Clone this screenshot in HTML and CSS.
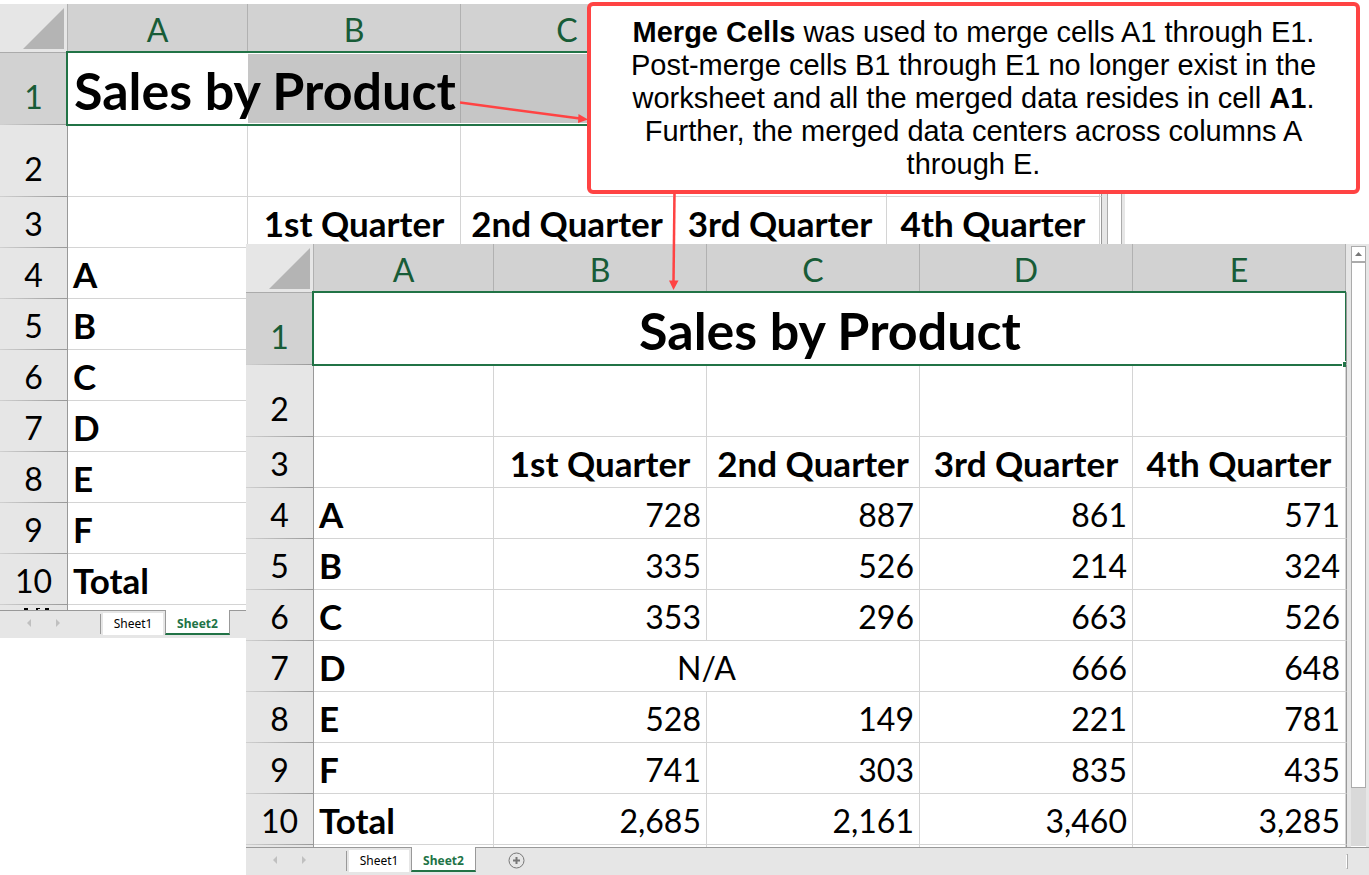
FILE: index.html
```
<!DOCTYPE html>
<html lang="en">
<head>
    <meta charset="UTF-8">
    <meta name="viewport" content="width=device-width, initial-scale=1.0">
    <title>Merge Cells</title>
    <link rel="stylesheet" href="styles.css">
</head>
<body>

    <div class="canvas">

        <!-- before the merge -->
        <section class="window window-before">
            <div class="main">
                <div class="pane">
                    <table class="sheet">
                        <colgroup>
                            <col class="col-num"><col class="col-a"><col class="col-q"><col class="col-q"><col class="col-q"><col class="col-q"><col>
                        </colgroup>
                        <thead>
                            <tr>
                                <th class="corner"><svg width="41" height="41" viewBox="0 0 41 41"><path d="M41 0V41H0Z" fill="#b4b4b4"/></svg></th>
                                <th>A</th><th>B</th><th>C</th><th>D</th><th>E</th><th class="filler"></th>
                            </tr>
                        </thead>
                        <tbody>
                            <tr class="tall selected">
                                <th>1</th><td class="title">Sales by Product</td><td class="shaded"></td><td class="shaded"></td><td class="shaded"></td><td class="shaded"></td><td class="filler"></td>
                            </tr>
                            <tr class="tall"><th>2</th><td></td><td></td><td></td><td></td><td></td><td class="filler"></td></tr>
                            <tr class="quarters"><th>3</th><td></td><td>1st Quarter</td><td>2nd Quarter</td><td>3rd Quarter</td><td>4th Quarter</td><td class="filler"></td></tr>
                            <tr><th>4</th><td class="name">A</td><td></td><td></td><td></td><td></td><td class="filler"></td></tr>
                            <tr><th>5</th><td class="name">B</td><td></td><td></td><td></td><td></td><td class="filler"></td></tr>
                            <tr><th>6</th><td class="name">C</td><td></td><td></td><td></td><td></td><td class="filler"></td></tr>
                            <tr><th>7</th><td class="name">D</td><td></td><td></td><td></td><td></td><td class="filler"></td></tr>
                            <tr><th>8</th><td class="name">E</td><td></td><td></td><td></td><td></td><td class="filler"></td></tr>
                            <tr><th>9</th><td class="name">F</td><td></td><td></td><td></td><td></td><td class="filler"></td></tr>
                            <tr><th>10</th><td class="name">Total</td><td></td><td></td><td></td><td></td><td class="filler"></td></tr>
                            <tr class="cut"><th><svg width="26" height="3" viewBox="0 0 26 3"><path d="M0 0H4V3H0ZM12 0H16V1H14V3H12ZM21 0H25V3H21Z"/></svg></th><td></td><td></td><td></td><td></td><td></td><td class="filler"></td></tr>
                        </tbody>
                    </table>
                </div>
                <div class="scroll">
                    <button class="scroll-up" aria-label="Scroll up"><svg width="7" height="4" viewBox="0 0 7 4"><path d="M3.5 0L7 4H0Z" fill="#777"/></svg></button>
                    <div class="thumb"></div>
                    <div class="track"></div>
                </div>
            </div>
            <nav class="tabs">
                <button class="arrow" aria-label="Previous sheet"><svg width="4" height="8" viewBox="0 0 4 8"><path d="M4 0V8L0 4Z" fill="#c0c0c0"/></svg></button>
                <button class="arrow" aria-label="Next sheet"><svg width="4" height="8" viewBox="0 0 4 8"><path d="M0 0V8L4 4Z" fill="#c0c0c0"/></svg></button>
                <span class="divider"></span>
                <button class="tab">Sheet1</button>
                <button class="tab active">Sheet2</button>
            </nav>
        </section>

        <!-- after the merge -->
        <section class="window window-after">
            <div class="main">
                <div class="pane">
                    <table class="sheet">
                        <colgroup>
                            <col class="col-num"><col class="col-a"><col class="col-q"><col class="col-q"><col class="col-q"><col class="col-q"><col>
                        </colgroup>
                        <thead>
                            <tr>
                                <th class="corner"><svg width="41" height="41" viewBox="0 0 41 41"><path d="M41 0V41H0Z" fill="#b4b4b4"/></svg></th>
                                <th>A</th><th>B</th><th>C</th><th>D</th><th>E</th><th class="filler"></th>
                            </tr>
                        </thead>
                        <tbody>
                            <tr class="tall selected">
                                <th>1</th><td class="title merged" colspan="5">Sales by Product<span class="handle"></span></td><td class="filler"></td>
                            </tr>
                            <tr class="tall"><th>2</th><td></td><td></td><td></td><td></td><td></td><td class="filler"></td></tr>
                            <tr class="quarters"><th>3</th><td></td><td>1st Quarter</td><td>2nd Quarter</td><td>3rd Quarter</td><td>4th Quarter</td><td class="filler"></td></tr>
                            <tr><th>4</th><td class="name">A</td><td>728</td><td>887</td><td>861</td><td>571</td><td class="filler"></td></tr>
                            <tr><th>5</th><td class="name">B</td><td>335</td><td>526</td><td>214</td><td>324</td><td class="filler"></td></tr>
                            <tr><th>6</th><td class="name">C</td><td>353</td><td>296</td><td>663</td><td>526</td><td class="filler"></td></tr>
                            <tr><th>7</th><td class="name">D</td><td class="merged" colspan="2">N/A</td><td>666</td><td>648</td><td class="filler"></td></tr>
                            <tr><th>8</th><td class="name">E</td><td>528</td><td>149</td><td>221</td><td>781</td><td class="filler"></td></tr>
                            <tr><th>9</th><td class="name">F</td><td>741</td><td>303</td><td>835</td><td>435</td><td class="filler"></td></tr>
                            <tr><th>10</th><td class="name">Total</td><td>2,685</td><td>2,161</td><td>3,460</td><td>3,285</td><td class="filler"></td></tr>
                            <tr class="cut"><th><svg width="26" height="3" viewBox="0 0 26 3"><path d="M0 0H4V3H0ZM12 0H16V1H14V3H12ZM21 0H25V3H21Z"/></svg></th><td></td><td></td><td></td><td></td><td></td><td class="filler"></td></tr>
                        </tbody>
                    </table>
                </div>
                <div class="scroll">
                    <button class="scroll-up" aria-label="Scroll up"><svg width="7" height="4" viewBox="0 0 7 4"><path d="M3.5 0L7 4H0Z" fill="#777"/></svg></button>
                    <div class="thumb"></div>
                    <div class="track"></div>
                </div>
            </div>
            <nav class="tabs">
                <button class="arrow" aria-label="Previous sheet"><svg width="4" height="8" viewBox="0 0 4 8"><path d="M4 0V8L0 4Z" fill="#c0c0c0"/></svg></button>
                <button class="arrow" aria-label="Next sheet"><svg width="4" height="8" viewBox="0 0 4 8"><path d="M0 0V8L4 4Z" fill="#c0c0c0"/></svg></button>
                <span class="divider"></span>
                <button class="tab">Sheet1</button>
                <button class="tab active">Sheet2</button>
                <button class="add" aria-label="New sheet">
                    <svg width="17" height="17" viewBox="0 0 17 17" fill="none" stroke="#777">
                        <circle cx="8.5" cy="8.5" r="7.5"/>
                        <path d="M8.5 5V12M5 8.5H12" stroke-width="2"/>
                    </svg>
                </button>
                <span class="grip"></span>
            </nav>
        </section>

        <p class="callout"><strong>Merge Cells</strong> was used to merge cells A1 through E1. Post-merge cells B1 through E1 no longer exist in the worksheet and all the merged data resides in cell <strong>A1</strong>. Further, the merged data centers across columns A through E.</p>

        <svg class="arrows" width="720" height="300" viewBox="0 0 720 300" fill="#ff4343" stroke="#ff4343">
            <path d="M460 102.500L580 118.500" stroke-width="2.500"/>
            <path d="M578.500 114L588 119.500L578 123Z" stroke="none"/>
            <path d="M674.500 194L673.500 282" stroke-width="2.500"/>
            <path d="M669 280.500H678.500L673.500 290Z" stroke="none"/>
        </svg>

    </div>

</body>
</html>
```
FILE: styles.css
```
*,
*::after {
    box-sizing: border-box;
}

body {
    margin: 0;
    background-color: #fff;
    color: #000;
    font-family: Lato, "Liberation Sans", sans-serif;
}

button {
    border: none;
    padding: 0;
    background: none;
    font: inherit;
    color: inherit;
}

svg {
    display: block;
}

.canvas {
    position: relative;
    min-height: 100vh;
    overflow: hidden;
}

/* windows */

.window {
    position: absolute;
    display: flex;
    flex-direction: column;
    background-color: #e6e6e6;
}

.window-before {
    top: 4px;
    left: 0;
    width: 1125px;
    height: 634px;
}

.window-after {
    top: 244px;
    left: 246px;
    right: 0;
    bottom: 0;
}

.main {
    flex: 1;
    min-height: 0;
    display: flex;
}

.pane {
    flex: 1;
    min-width: 0;
    overflow: hidden;
}

/* grid */

.sheet {
    width: 100%;
    table-layout: fixed;
    border-collapse: separate;
    border-spacing: 0;
    font-size: 32px;
    line-height: 40px;
}

.col-num {
    width: 68px;
}

.col-a {
    width: 180px;
}

.col-q {
    width: 213px;
}

.sheet th {
    padding: 0;
    font-weight: normal;
    text-align: center;
    vertical-align: bottom;
}

.sheet thead th {
    height: 49px;
    padding-bottom: 2px;
    background-color: #d2d2d2;
    border-right: 1px solid #b1b1b1;
    border-bottom: 1px solid #ababab;
    color: #185c37;
}

.sheet thead .corner {
    padding: 0 3px 3px 0;
    background-color: #e6e6e6;
}

.corner svg {
    margin-left: auto;
}

.sheet thead .filler {
    background-color: #e6e6e6;
    border-right: none;
}

.sheet tbody th {
    height: 51px;
    padding-bottom: 4px;
    background: linear-gradient(to right, #d0d0d0, #999) bottom / 100% 1px no-repeat #e6e6e6;
    border-right: 1px solid #999;
}

.sheet td {
    padding: 0 5px 3px;
    background-color: #fff;
    border-right: 1px solid #d4d4d4;
    border-bottom: 1px solid #d4d4d4;
    text-align: right;
    vertical-align: bottom;
    white-space: nowrap;
}

.sheet td.filler {
    padding: 0;
    border-right: 1px solid #999;
}

.sheet .tall th {
    height: 72px;
    padding-bottom: 8px;
}

.sheet .cut th {
    padding: 3px 0 0 24px;
    vertical-align: top;
}

.sheet .name {
    padding-bottom: 4px;
    font-size: 35px;
    text-align: left;
    font-weight: bold;
}

.sheet .quarters td {
    padding: 0 0 4px;
    font-size: 35px;
    text-align: center;
    font-weight: bold;
}

.sheet .title {
    padding: 0 6px 6px;
    border-right: none;
    font-size: 52px;
    line-height: 56px;
    font-weight: bold;
    text-align: left;
}

.sheet .merged {
    position: relative;
    text-align: center;
}

.sheet .shaded {
    background-color: #c6c6c6;
    border-right-color: #ababab;
}

/* selection */

.selected {
    position: relative;
}

.sheet .selected th {
    background-color: #d2d2d2;
    color: #185c37;
}

.selected::after {
    content: "";
    position: absolute;
    top: -2px;
    bottom: -1px;
    left: 66px;
    width: 1034px;
    border: 2px solid #217346;
    border-right-width: 1px;
    box-shadow: inset 0 0 0 1px #fff;
}

.handle {
    position: absolute;
    right: 0;
    bottom: -3px;
    z-index: 1;
    width: 4px;
    height: 6px;
    background-color: #217346;
    border-left: 1px solid #fff;
    border-top: 1px solid #fff;
}

/* scroll bar */

.scroll {
    display: flex;
    flex-direction: column;
    width: 21px;
    padding: 2px 3px 0;
}

.scroll-up {
    display: flex;
    align-items: center;
    justify-content: center;
    height: 16px;
    background-color: #fff;
    border: 1px solid #ababab;
}

.thumb {
    flex: 9;
    background-color: #fff;
    border: 1px solid #ababab;
}

.track {
    flex: 1;
    background-color: #d9d9d9;
    border-bottom: 1px solid #fff;
}

/* sheet tabs */

.tabs {
    display: flex;
    align-items: flex-start;
    height: 28px;
    border-top: 1px solid #999;
    font-family: "Noto Sans", "Open Sans", sans-serif;
    font-size: 12px;
    line-height: 20px;
}

.arrow {
    margin: 8px 0 0 25px;
}

.arrow:first-child {
    margin-left: 27px;
}

.divider {
    width: 1px;
    height: 20px;
    margin: 3px 2px 0 40px;
    background-color: #999;
}

.tab {
    width: 60px;
    height: 22px;
    margin: 2px 2px 0 0;
    background-color: #fff;
}

.tab.active {
    width: 65px;
    height: 25px;
    margin: -1px 0 0;
    padding-top: 4px;
    border: 1px solid #999;
    border-top: none;
    border-bottom: 2px solid #217346;
    color: #217346;
    font-weight: bold;
}

.add {
    margin: 4px 0 0 32px;
}

.grip {
    width: 2px;
    height: 15px;
    margin: 6px 21px 0 auto;
    border: 1px solid #ababab;
    border-left-color: #fff;
}

/* callout */

.callout {
    position: absolute;
    top: 2px;
    left: 587px;
    width: 773px;
    margin: 0;
    padding: 10px 36px 9px;
    background-color: #fff;
    border: 4px solid #ff4343;
    border-radius: 6px;
    font-family: "Liberation Sans", Arial, sans-serif;
    font-size: 29px;
    line-height: 33px;
    text-align: center;
}

.arrows {
    position: absolute;
    top: 0;
    left: 0;
    pointer-events: none;
}
```
